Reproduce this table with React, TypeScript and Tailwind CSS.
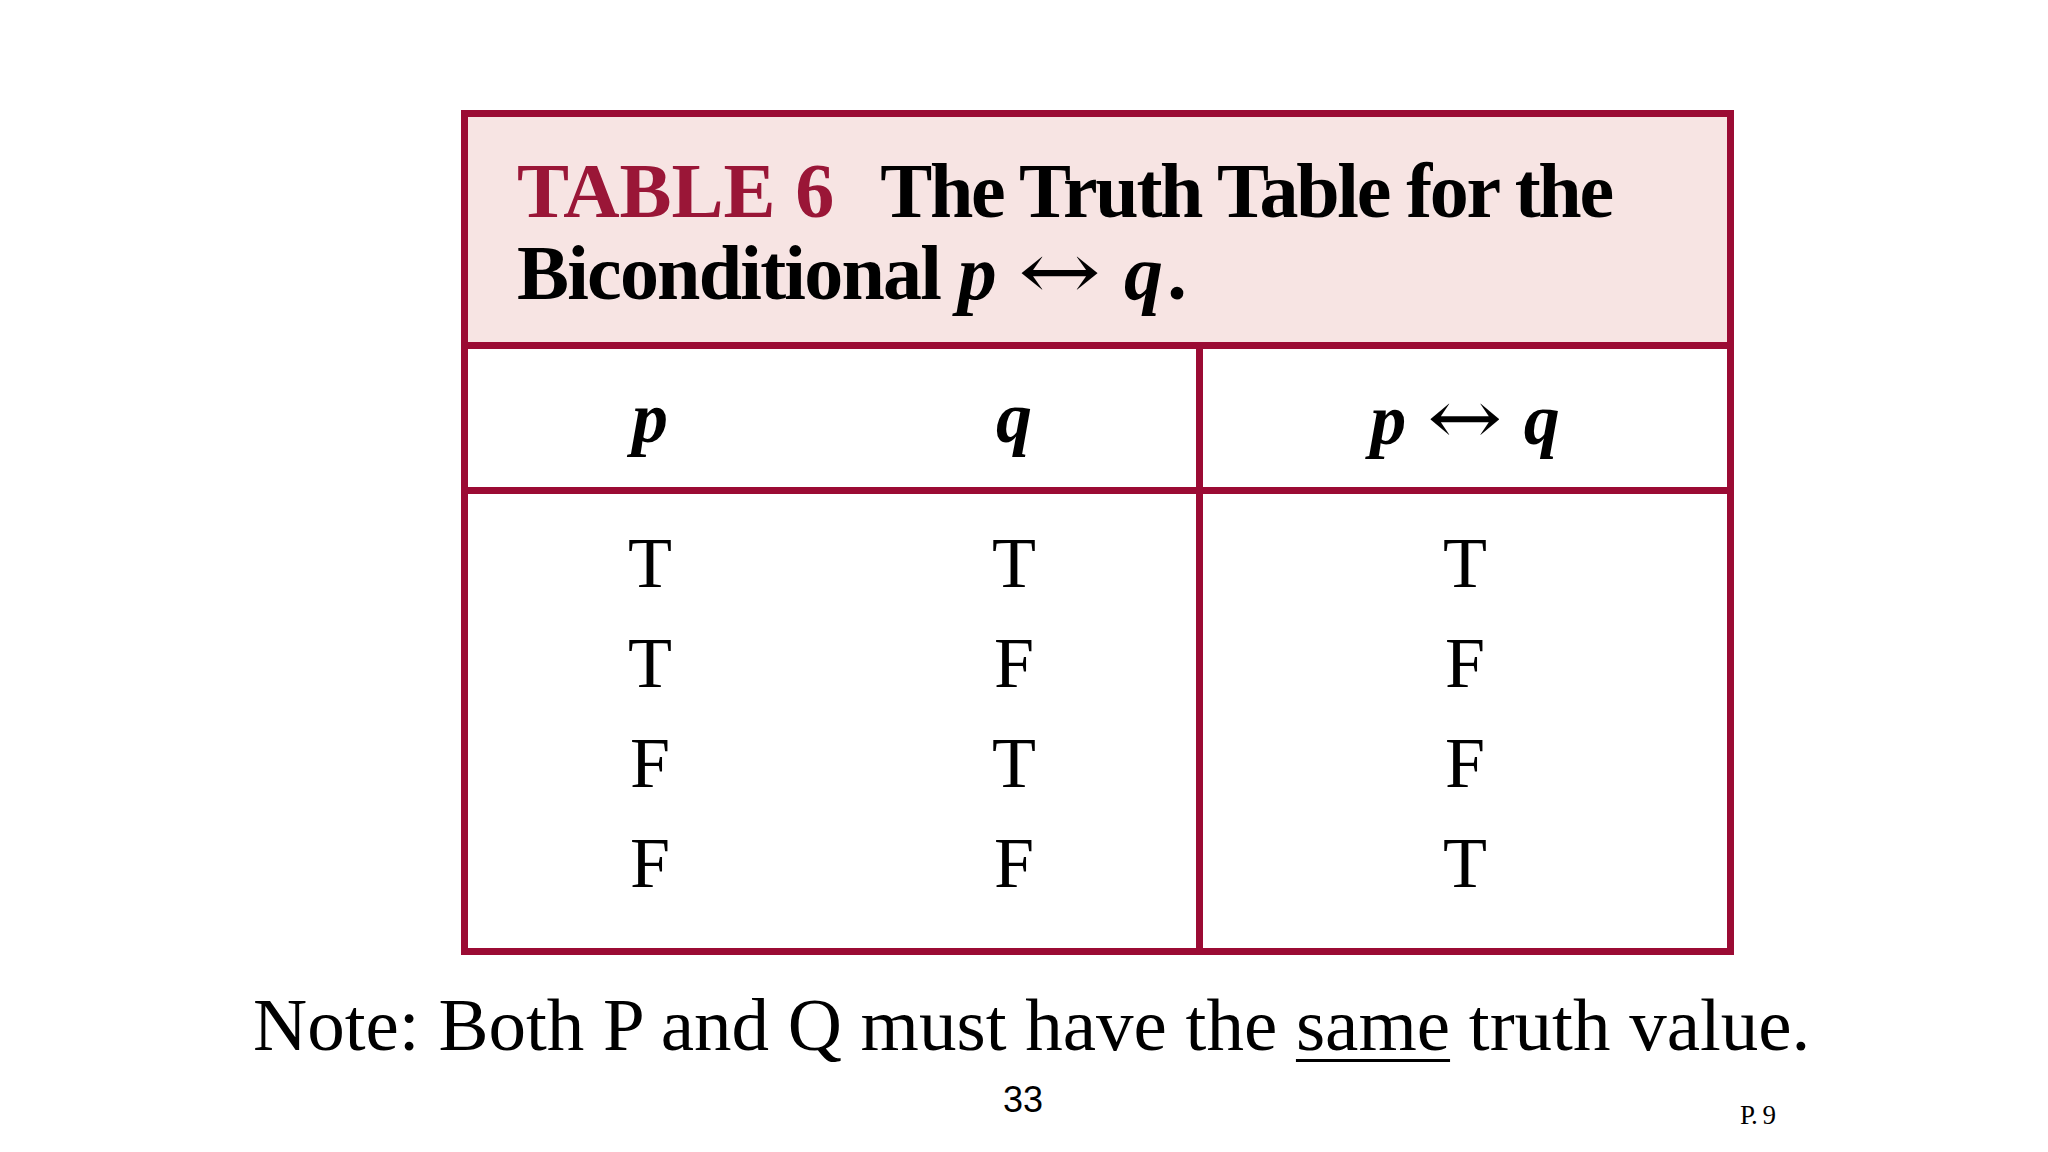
import React from "react";

const serif = "font-['Liberation_Serif','Times_New_Roman','DejaVu_Serif',serif]";

function Arrow({ cls }: { cls: string }) {
  return (
    <span className={`font-['DejaVu_Serif',serif] font-normal not-italic tracking-normal inline-block ${cls}`}>↔</span>
  );
}

export default function App() {
  const rows: [string, string, string][] = [
    ["T", "T", "T"],
    ["T", "F", "F"],
    ["F", "T", "F"],
    ["F", "F", "T"],
  ];
  return (
    <div className={`w-[2048px] h-[1152px] bg-white overflow-hidden ${serif} text-black`}>
      <div className="pt-[110px] pl-[461px]">
        <div className="w-[1273px] border-[7px] border-[#9b0b34] bg-white">
          {/* Caption */}
          <div className="h-[225px] bg-[#f7e4e3] px-[49px] pt-[33px] text-[78px] leading-[81px] font-bold">
            <div className="whitespace-nowrap">
              <span className="text-[#9a1637]">TABLE 6</span>
              <span className="ml-[46px] tracking-[-2.3px]">The Truth Table for the</span>
            </div>
            <div className="whitespace-nowrap tracking-[-1.8px]">
              Biconditional <span className="italic">p</span>
              <Arrow cls="text-[80px] mx-[31px] scale-x-[1.24]" />
              <span className="italic">q</span>
              <span className="ml-[6px]">.</span>
            </div>
          </div>
          <div className="h-[7px] bg-[#9b0b34]" />
          {/* Column headers */}
          <div className="flex h-[138px] text-[72px] leading-[138px] font-bold italic">
            <div className="w-[728px] grid grid-cols-2 text-center">
              <div>p</div>
              <div>q</div>
            </div>
            <div className="w-[7px] bg-[#9b0b34]" />
            <div className="flex-1 text-center">
              p<Arrow cls="text-[76px] mx-[27px] scale-x-[1.18]" />q
            </div>
          </div>
          <div className="h-[7px] bg-[#9b0b34]" />
          {/* Data */}
          <div className="flex h-[454px] text-[72px] leading-[100px]">
            <div className="w-[728px] grid grid-cols-2 content-start text-center pt-[19px]">
              {rows.map((r, i) => (
                <React.Fragment key={i}>
                  <div>{r[0]}</div>
                  <div>{r[1]}</div>
                </React.Fragment>
              ))}
            </div>
            <div className="w-[7px] bg-[#9b0b34]" />
            <div className="flex-1 text-center pt-[19px]">
              {rows.map((r, i) => (
                <div key={i}>{r[2]}</div>
              ))}
            </div>
          </div>
        </div>
      </div>
      {/* Note */}
      <div className="mt-[27px] pl-[253px] text-[75px] leading-[86px] whitespace-nowrap">
        Note: Both P and Q must have the{" "}
        <span className="underline decoration-[3px] underline-offset-[9px]">same</span> truth value.
      </div>
      <div className="relative h-[80px]">
        <div className="absolute left-[1003px] top-[12px] font-['Liberation_Sans',Arial,sans-serif] text-[36px] leading-[40px]">
          33
        </div>
        <div className="absolute left-[1740px] top-[32px] text-[27px] leading-[30px] tracking-[-1px]">
          P. 9
        </div>
      </div>
    </div>
  );
}
